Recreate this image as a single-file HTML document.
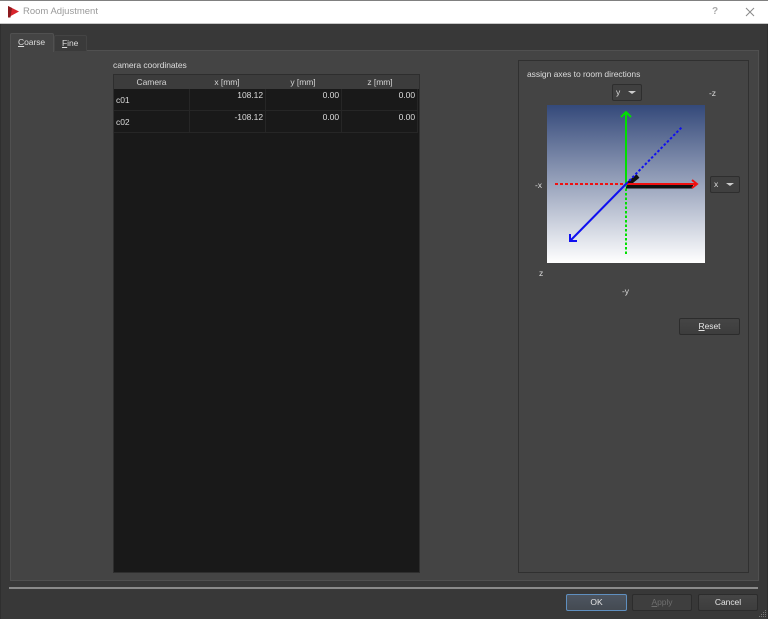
<!DOCTYPE html>
<html><head><meta charset="utf-8"><style>
html,body{margin:0;padding:0}
body{width:768px;height:619px;overflow:hidden;background:#383838;position:relative;font-family:"Liberation Sans",sans-serif;font-size:8.5px;letter-spacing:-.05px;color:#dcdcdc}
.a{position:absolute;box-sizing:border-box}
.t{position:absolute;white-space:nowrap;line-height:12px}
.r{text-align:right}
.btn{position:absolute;box-sizing:border-box;height:17px;border:1px solid #2c2c2c;border-radius:2px;background:linear-gradient(#454545,#3d3d3d);text-align:center;line-height:15px;color:#e4e4e4}
.combo{position:absolute;box-sizing:border-box;height:17px;border:1px solid #2e2e2e;border-radius:2px;background:#404040;line-height:15px;padding-left:3px;color:#ddd}
.combo i{position:absolute;right:5px;top:6px;width:0;height:0;border-left:4px solid transparent;border-right:4px solid transparent;border-top:3px solid #ccc}
u{text-decoration:underline}
.hd{position:absolute;top:75px;height:14px;background:#3c3c3c;border-right:1px solid #303030;text-align:center;line-height:14px;color:#d4d4d4}
.cell{position:absolute;box-sizing:border-box;border-right:1px solid #262626;border-bottom:1px solid #262626;padding:0 2px 0 2px;line-height:12px;color:#dcdcdc}
</style></head><body>
<div class="a" style="left:0;top:0;width:768px;height:24px;background:#fff;border-top:1px solid #808080;border-bottom:1px solid #c8c8c8"></div>
<svg class="a" style="left:7px;top:6px" width="13" height="13"><polygon points="1,0 12,5.5 1,11.5" fill="#d8242c"/><polygon points="1,0 5,2 3.5,11.5 1,11.5" fill="#8c1a1e"/></svg>
<div class="t" style="left:23px;top:6px;font-size:9.5px;letter-spacing:0;color:#9a9a9a">Room Adjustment</div>
<div class="t" style="left:712px;top:6px;font-size:10px;font-weight:bold;color:#aaa">?</div>
<svg class="a" style="left:745px;top:7px" width="10" height="10"><path d="M1 1L9 9M9 1L1 9" stroke="#8a8a8a" stroke-width="1" fill="none"/></svg>
<div class="a" style="left:0;top:24px;width:1px;height:595px;background:#2f2f2f"></div>
<div class="a" style="left:767px;top:24px;width:1px;height:595px;background:#2f2f2f"></div>
<div class="a" style="left:10px;top:50px;width:749px;height:531px;background:#444;border:1px solid #505050"></div>
<div class="a" style="left:10px;top:33px;width:44px;height:19px;background:#444;border:1px solid #505050;border-bottom:0;border-radius:2px 2px 0 0"></div>
<div class="a" style="left:54px;top:35px;width:33px;height:16px;background:#3a3a3a;border:1px solid #444;border-bottom:0;border-radius:2px 2px 0 0"></div>
<div class="t" style="left:18px;top:36px"><u>C</u>oarse</div>
<div class="t" style="left:62px;top:37px"><u>F</u>ine</div>
<div class="t" style="left:113px;top:59px">camera coordinates</div>
<div class="a" style="left:113px;top:74px;width:307px;height:499px;background:#191919;border:1px solid #2e2e2e"></div>
<div class="hd" style="left:114px;width:75px">Camera</div>
<div class="hd" style="left:189px;width:76px">x [mm]</div>
<div class="hd" style="left:265px;width:76px">y [mm]</div>
<div class="hd" style="left:341px;width:78px;border-right:0">z [mm]</div>
<div class="cell" style="left:114px;top:89px;width:76px;height:22px;padding-top:5px">c01</div>
<div class="cell r" style="left:190px;top:89px;width:76px;height:22px">108.12</div>
<div class="cell r" style="left:266px;top:89px;width:76px;height:22px">0.00</div>
<div class="cell r" style="left:342px;top:89px;width:76px;height:22px">0.00</div>
<div class="cell" style="left:114px;top:111px;width:76px;height:22px;padding-top:5px">c02</div>
<div class="cell r" style="left:190px;top:111px;width:76px;height:22px">-108.12</div>
<div class="cell r" style="left:266px;top:111px;width:76px;height:22px">0.00</div>
<div class="cell r" style="left:342px;top:111px;width:76px;height:22px">0.00</div>
<div class="a" style="left:518px;top:60px;width:231px;height:513px;background:#444;border:1px solid #303030"></div>
<div class="t" style="left:527px;top:68px">assign axes to room directions</div>
<div class="combo" style="left:612px;top:84px;width:30px">y<i></i></div>
<div class="combo" style="left:710px;top:176px;width:30px">x<i></i></div>
<div class="t" style="left:709px;top:87px">-z</div>
<div class="t" style="left:535px;top:179px">-x</div>
<div class="t" style="left:539px;top:267px">z</div>
<div class="t" style="left:622px;top:285px">-y</div>
<svg class="a" style="left:547px;top:105px" width="158" height="158" viewBox="547 105 158 158">
<defs><linearGradient id="g" x1="0" y1="0" x2="0" y2="1"><stop offset="0" stop-color="#34497a"/><stop offset="1" stop-color="#ffffff"/></linearGradient></defs>
<rect x="547" y="105" width="158" height="158" fill="url(#g)"/>
<path d="M626 186.5H693" stroke="#111" stroke-width="4"/>
<path d="M627 185L638 176" stroke="#111" stroke-width="4.5"/>
<path d="M555 184H626" stroke="#f01010" stroke-width="2" stroke-dasharray="3 2" fill="none"/>
<path d="M626 184H697M692 180L697 184L692 188" stroke="#f01010" stroke-width="2" fill="none"/>
<path d="M626 112V184M621 117L626 112L631 117" stroke="#00e000" stroke-width="2" fill="none"/>
<path d="M626 184V255" stroke="#00e000" stroke-width="2" stroke-dasharray="2.5 2" fill="none"/>
<path d="M626 184L570 241M570 234V241H577" stroke="#1010f0" stroke-width="2" fill="none"/>
<path d="M626 184L682 127" stroke="#1010f0" stroke-width="2" stroke-dasharray="2.5 2" fill="none"/>
</svg>
<div class="btn" style="left:679px;top:318px;width:61px"><u>R</u>eset</div>
<div class="a" style="left:9px;top:587px;width:749px;height:2px;background:#8a8a8a"></div>
<div class="btn" style="left:566px;top:594px;width:61px;border-color:#5f8fbf;background:linear-gradient(#4d5560,#444a52)">OK</div>
<div class="btn" style="left:632px;top:594px;width:60px;color:#6e6e6e;background:#3e3e3e"><u>A</u>pply</div>
<div class="btn" style="left:698px;top:594px;width:60px">Cancel</div>
<svg class="a" style="left:758px;top:608px" width="10" height="11"><path d="M7 2h1v1h-1zM5 4h1v1h-1zM7 4h1v1h-1zM3 6h1v1h-1zM5 6h1v1h-1zM7 6h1v1h-1zM1 8h1v1h-1zM3 8h1v1h-1zM5 8h1v1h-1zM7 8h1v1h-1z" fill="#777"/></svg>
</body></html>
